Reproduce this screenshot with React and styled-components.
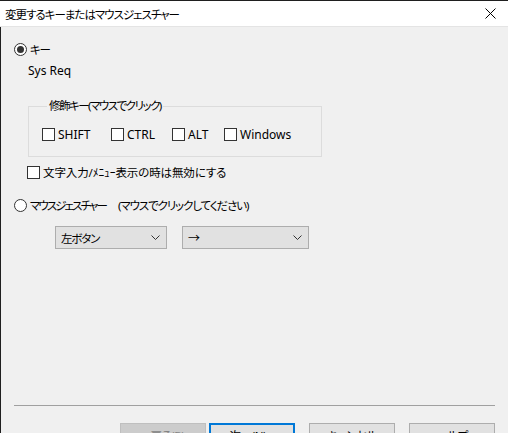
import React from 'react'
import styled, { createGlobalStyle } from 'styled-components'

const GlobalStyle = createGlobalStyle`
  html, body {
    margin: 0;
    padding: 0;
    background: #f0f0f0;
  }
  body {
    font-family: "Noto Sans", "Noto Sans CJK JP", sans-serif;
    font-size: 12px;
    color: #000;
    font-feature-settings: "palt";
  }
`

const Jp = styled.span`
  font-size: 11.5px;
  letter-spacing: ${p => p.$tight ?? -1.2}px;
`

const Window = styled.div`
  width: 508px;
  height: 433px;
  display: flex;
  flex-direction: column;
  overflow: hidden;
  border-top: 1px solid #1f1f1f;
  box-sizing: border-box;
`

const TitleBar = styled.div`
  height: 25px;
  flex-shrink: 0;
  display: flex;
  align-items: center;
  padding-left: 5px;
  background: #fff;
  border-bottom: 1px solid #e4e4e4;
`

const CloseButton = styled.div`
  margin-left: auto;
  width: 46px;
  height: 25px;
  display: flex;
  align-items: center;
  justify-content: center;
  margin-right: -5px;
`

const Body = styled.div`
  flex: 1;
  display: flex;
  flex-direction: column;
  padding: 14px 13px 0 13px;
  border-left: 1px solid #1f1f1f;
  box-sizing: border-box;
`

const Row = styled.label`
  display: flex;
  align-items: center;
  height: 16px;
  margin-left: ${p => p.$indent || 0}px;
  margin-top: ${p => p.$top || 0}px;
  white-space: nowrap;
`

const Radio = styled.span`
  width: 11px;
  height: 11px;
  border: 1px solid #333;
  border-radius: 50%;
  background: #fff;
  display: inline-flex;
  align-items: center;
  justify-content: center;
  margin-right: 3px;
  flex-shrink: 0;

  &::after {
    content: '';
    width: 7px;
    height: 7px;
    border-radius: 50%;
    background: #333;
    display: ${p => (p.$checked ? 'block' : 'none')};
  }
`

const Box = styled.span`
  width: 11px;
  height: 11px;
  border: 1px solid #333;
  background: #fff;
  margin-right: 3px;
  flex-shrink: 0;
`

const Hint = styled(Jp)`
  margin-left: 12px;
`

const Group = styled.fieldset`
  margin: 21px 0 0 14px;
  width: 294px;
  box-sizing: border-box;
  border: 1px solid #dcdcdc;
  padding: 13px 0 14px 13px;

  legend {
    padding: 0 2px;
    margin-left: 5px;
    line-height: 14px;
  }
`

const CheckGrid = styled.div`
  display: grid;
  grid-template-columns: 69px 61px 52px auto;
`

const Selects = styled.div`
  display: flex;
  gap: 15px;
  margin: 13px 0 0 41px;
`

const Select = styled.div`
  width: ${p => p.$width}px;
  height: 23px;
  box-sizing: border-box;
  background: #e1e1e1;
  border: 1px solid #adadad;
  display: flex;
  align-items: center;
  padding: 0 6px 0 5px;
`

const Chevron = () => (
  <svg width="9" height="5" viewBox="0 0 9 5" style={{ marginLeft: 'auto' }}>
    <path d="M0.5 0.5 L4.5 4.5 L8.5 0.5" fill="none" stroke="#333" strokeWidth="1" />
  </svg>
)

const Separator = styled.div`
  margin-top: auto;
  height: 1px;
  background: #a0a0a0;
  flex-shrink: 0;
`

const Buttons = styled.div`
  display: flex;
  justify-content: flex-end;
  margin-top: 17px;
  height: 10px;
`

const Button = styled.div`
  width: 86px;
  height: 23px;
  flex-shrink: 0;
  box-sizing: border-box;
  display: flex;
  align-items: center;
  justify-content: center;
  margin-left: ${p => p.$gap}px;
  background: ${p => (p.$disabled ? '#cccccc' : '#e1e1e1')};
  color: ${p => (p.$disabled ? '#838383' : '#000')};
  border: ${p => (p.$default ? '2px solid #0078d7' : `1px solid ${p.$disabled ? '#bfbfbf' : '#adadad'}`)};
`

export default function App() {
  return (
    <>
      <GlobalStyle />
      <Window>
        <TitleBar>
          <Jp $tight={-1}>変更するキーまたはマウスジェスチャー</Jp>
          <CloseButton>
            <svg width="11" height="11" viewBox="0 0 11 11">
              <path d="M0.5 0.5 L10.5 10.5 M10.5 0.5 L0.5 10.5" stroke="#000" strokeWidth="1" />
            </svg>
          </CloseButton>
        </TitleBar>
        <Body>
          <Row>
            <Radio $checked />
            <Jp>キー</Jp>
          </Row>
          <Row $indent={14} $top={5}>Sys Req</Row>

          <Group>
            <legend>
              <Jp $tight={-1.5}>修飾キー(マウスでクリック)</Jp>
            </legend>
            <CheckGrid>
              <Row><Box />SHIFT</Row>
              <Row><Box />CTRL</Row>
              <Row><Box />ALT</Row>
              <Row><Box />Windows</Row>
            </CheckGrid>
          </Group>

          <Row $indent={13} $top={7}>
            <Box />
            <Jp $tight={-0.1}>文字入力/ﾒﾆｭｰ表示の時は無効にする</Jp>
          </Row>

          <Row $top={17}>
            <Radio />
            <Jp $tight={-1.9}>マウスジェスチャー</Jp>
            <Hint $tight={-1.1}>(マウスでクリックしてください)</Hint>
          </Row>

          <Selects>
            <Select $width={112}>
              <Jp>左ボタン</Jp>
              <Chevron />
            </Select>
            <Select $width={127}>
              →
              <Chevron />
            </Select>
          </Selects>

          <Separator />
          <Buttons>
            <Button $disabled $gap={0}><Jp $tight={-0.5}>&lt; 戻る(B)</Jp></Button>
            <Button $default $gap={3}><Jp $tight={-0.5}>次へ(N) &gt;</Jp></Button>
            <Button $gap={14}><Jp $tight={-0.5}>キャンセル</Jp></Button>
            <Button $gap={14}><Jp $tight={-0.5}>ヘルプ</Jp></Button>
          </Buttons>
        </Body>
      </Window>
    </>
  )
}
